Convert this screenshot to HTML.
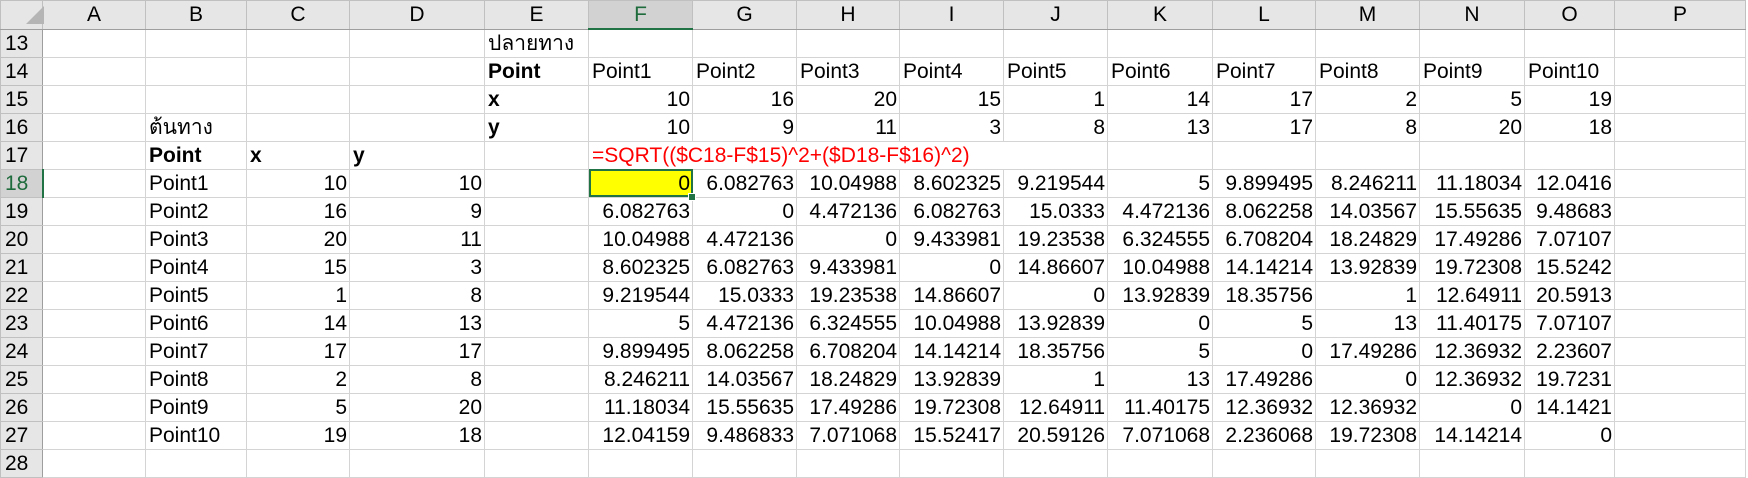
<!DOCTYPE html>
<html><head><meta charset="utf-8"><style>
body{margin:0;background:#fff;width:1748px;height:477px;overflow:hidden}
table{border-collapse:collapse;table-layout:fixed;font-family:"Liberation Sans","Noto Sans CJK SC",sans-serif;font-size:21px;color:#000;position:absolute;left:0;top:0}
td{height:28px;border:1px solid #d4d4d4;padding:0 2px;white-space:nowrap;overflow:visible;text-align:right;line-height:27px;box-sizing:border-box}
tr.h td{background:#e6e6e6;text-align:center;border-color:#c0c0c0;border-bottom:1px solid #9e9e9e;height:27px;font-size:21px}
td.rn{background:#e6e6e6;border-color:#c0c0c0;border-right:1px solid #9e9e9e;font-size:21px;text-align:left;padding-left:4px}
td.l{text-align:left;padding-left:3px}
td.b{font-weight:bold;text-align:left;padding-left:3px}
tr.h td.sel{background:#d2d2d2;border-bottom:2px solid #217346;color:#1e6b3c}
td.rsel{background:#d2d2d2;color:#1e6b3c;border-right:2px solid #217346}
td.y{background:#ffff00;outline:2px solid #217346;outline-offset:-2px;position:relative}
td.y::after{content:"";position:absolute;right:-4px;bottom:-4px;width:6px;height:6px;background:#217346;border:1px solid #fff}
td.f{color:#f00;text-align:left;padding-left:3px}
</style></head><body>
<table>
<colgroup><col style="width:42px"><col style="width:103px"><col style="width:101px"><col style="width:103px"><col style="width:135px"><col style="width:104px"><col style="width:104px"><col style="width:104px"><col style="width:103px"><col style="width:104px"><col style="width:104px"><col style="width:105px"><col style="width:103px"><col style="width:104px"><col style="width:105px"><col style="width:90px"><col style="width:131px"></colgroup>
<tr class="h"><td style="background:#e6e6e6"><svg width="20" height="20" style="position:relative;left:12px;top:3px"><polygon points="20,2 20,20 2,20" fill="#b5b5b5"/></svg></td><td>A</td><td>B</td><td>C</td><td>D</td><td>E</td><td class="sel">F</td><td>G</td><td>H</td><td>I</td><td>J</td><td>K</td><td>L</td><td>M</td><td>N</td><td>O</td><td>P</td></tr>
<tr><td class="rn">13</td><td></td><td></td><td></td><td></td><td class="l">ปลายทาง</td><td></td><td></td><td></td><td></td><td></td><td></td><td></td><td></td><td></td><td></td><td></td></tr>
<tr><td class="rn">14</td><td></td><td></td><td></td><td></td><td class="b">Point</td><td class="l">Point1</td><td class="l">Point2</td><td class="l">Point3</td><td class="l">Point4</td><td class="l">Point5</td><td class="l">Point6</td><td class="l">Point7</td><td class="l">Point8</td><td class="l">Point9</td><td class="l">Point10</td><td></td></tr>
<tr><td class="rn">15</td><td></td><td></td><td></td><td></td><td class="b">x</td><td>10</td><td>16</td><td>20</td><td>15</td><td>1</td><td>14</td><td>17</td><td>2</td><td>5</td><td>19</td><td></td></tr>
<tr><td class="rn">16</td><td></td><td class="l">ต้นทาง</td><td></td><td></td><td class="b">y</td><td>10</td><td>9</td><td>11</td><td>3</td><td>8</td><td>13</td><td>17</td><td>8</td><td>20</td><td>18</td><td></td></tr>
<tr><td class="rn">17</td><td></td><td class="b">Point</td><td class="b">x</td><td class="b">y</td><td></td><td class="f" colspan="5">=SQRT(($C18-F$15)^2+($D18-F$16)^2)</td><td></td><td></td><td></td><td></td><td></td><td></td></tr>
<tr><td class="rn rsel">18</td><td></td><td class="l">Point1</td><td>10</td><td>10</td><td></td><td class="y">0</td><td>6.082763</td><td>10.04988</td><td>8.602325</td><td>9.219544</td><td>5</td><td>9.899495</td><td>8.246211</td><td>11.18034</td><td>12.0416</td><td></td></tr>
<tr><td class="rn">19</td><td></td><td class="l">Point2</td><td>16</td><td>9</td><td></td><td>6.082763</td><td>0</td><td>4.472136</td><td>6.082763</td><td>15.0333</td><td>4.472136</td><td>8.062258</td><td>14.03567</td><td>15.55635</td><td>9.48683</td><td></td></tr>
<tr><td class="rn">20</td><td></td><td class="l">Point3</td><td>20</td><td>11</td><td></td><td>10.04988</td><td>4.472136</td><td>0</td><td>9.433981</td><td>19.23538</td><td>6.324555</td><td>6.708204</td><td>18.24829</td><td>17.49286</td><td>7.07107</td><td></td></tr>
<tr><td class="rn">21</td><td></td><td class="l">Point4</td><td>15</td><td>3</td><td></td><td>8.602325</td><td>6.082763</td><td>9.433981</td><td>0</td><td>14.86607</td><td>10.04988</td><td>14.14214</td><td>13.92839</td><td>19.72308</td><td>15.5242</td><td></td></tr>
<tr><td class="rn">22</td><td></td><td class="l">Point5</td><td>1</td><td>8</td><td></td><td>9.219544</td><td>15.0333</td><td>19.23538</td><td>14.86607</td><td>0</td><td>13.92839</td><td>18.35756</td><td>1</td><td>12.64911</td><td>20.5913</td><td></td></tr>
<tr><td class="rn">23</td><td></td><td class="l">Point6</td><td>14</td><td>13</td><td></td><td>5</td><td>4.472136</td><td>6.324555</td><td>10.04988</td><td>13.92839</td><td>0</td><td>5</td><td>13</td><td>11.40175</td><td>7.07107</td><td></td></tr>
<tr><td class="rn">24</td><td></td><td class="l">Point7</td><td>17</td><td>17</td><td></td><td>9.899495</td><td>8.062258</td><td>6.708204</td><td>14.14214</td><td>18.35756</td><td>5</td><td>0</td><td>17.49286</td><td>12.36932</td><td>2.23607</td><td></td></tr>
<tr><td class="rn">25</td><td></td><td class="l">Point8</td><td>2</td><td>8</td><td></td><td>8.246211</td><td>14.03567</td><td>18.24829</td><td>13.92839</td><td>1</td><td>13</td><td>17.49286</td><td>0</td><td>12.36932</td><td>19.7231</td><td></td></tr>
<tr><td class="rn">26</td><td></td><td class="l">Point9</td><td>5</td><td>20</td><td></td><td>11.18034</td><td>15.55635</td><td>17.49286</td><td>19.72308</td><td>12.64911</td><td>11.40175</td><td>12.36932</td><td>12.36932</td><td>0</td><td>14.1421</td><td></td></tr>
<tr><td class="rn">27</td><td></td><td class="l">Point10</td><td>19</td><td>18</td><td></td><td>12.04159</td><td>9.486833</td><td>7.071068</td><td>15.52417</td><td>20.59126</td><td>7.071068</td><td>2.236068</td><td>19.72308</td><td>14.14214</td><td>0</td><td></td></tr>
<tr><td class="rn">28</td><td></td><td></td><td></td><td></td><td></td><td></td><td></td><td></td><td></td><td></td><td></td><td></td><td></td><td></td><td></td><td></td></tr>
</table>
</body></html>
